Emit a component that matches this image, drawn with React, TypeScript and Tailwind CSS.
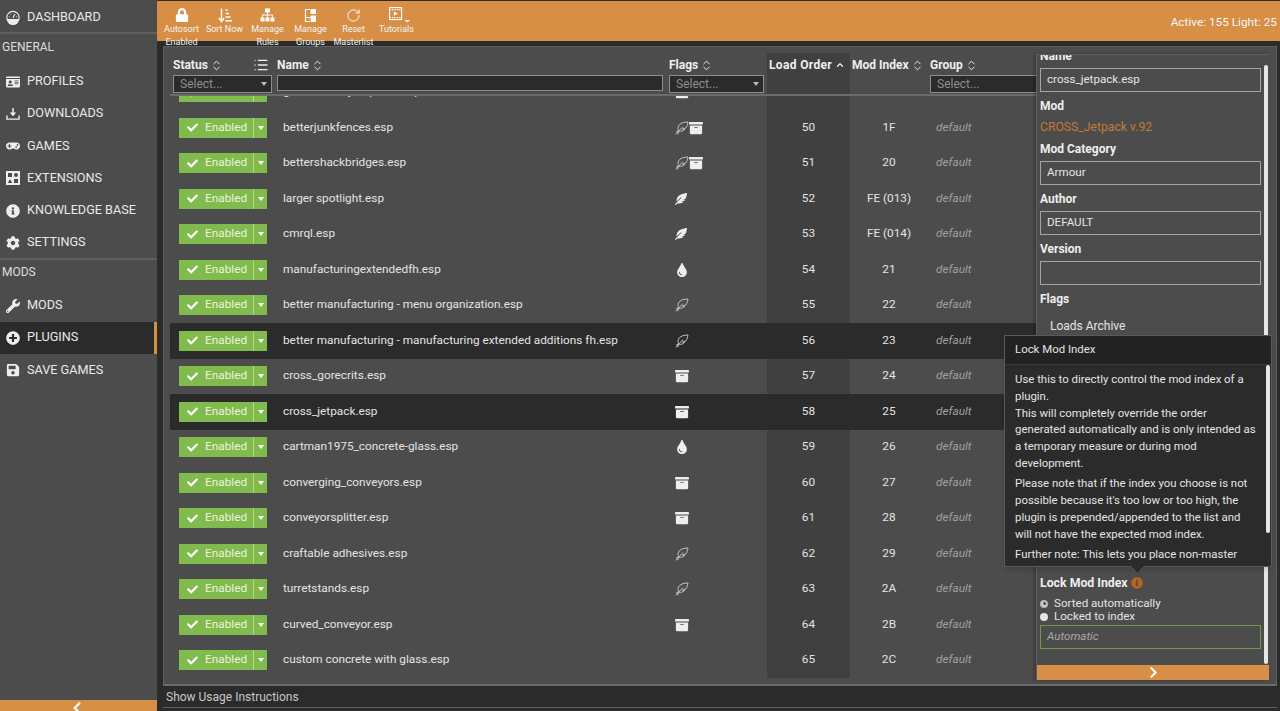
import { ChevronsUpDown, ChevronUp, List, RotateCw } from "lucide-react";
import {
  FaArchive,
  FaCheck,
  FaChevronLeft,
  FaChevronRight,
  FaCog,
  FaFeatherAlt,
  FaGamepad,
  FaIdCard,
  FaInfoCircle,
  FaLock,
  FaPlusCircle,
  FaSave,
  FaTint,
  FaWrench,
} from "react-icons/fa";
import type { ReactNode } from "react";

type Flag = "outline" | "feather" | "archive" | "drop";

const plugins: { name: string; flags: Flag[]; order: number; index: string }[] = [
  { name: "glass_conveyor_patch.esp", flags: ["archive"], order: 49, index: "1E" },
  { name: "betterjunkfences.esp", flags: ["outline", "archive"], order: 50, index: "1F" },
  { name: "bettershackbridges.esp", flags: ["outline", "archive"], order: 51, index: "20" },
  { name: "larger spotlight.esp", flags: ["feather"], order: 52, index: "FE (013)" },
  { name: "cmrql.esp", flags: ["feather"], order: 53, index: "FE (014)" },
  { name: "manufacturingextendedfh.esp", flags: ["drop"], order: 54, index: "21" },
  { name: "better manufacturing - menu organization.esp", flags: ["outline"], order: 55, index: "22" },
  { name: "better manufacturing - manufacturing extended additions fh.esp", flags: ["outline"], order: 56, index: "23" },
  { name: "cross_gorecrits.esp", flags: ["archive"], order: 57, index: "24" },
  { name: "cross_jetpack.esp", flags: ["archive"], order: 58, index: "25" },
  { name: "cartman1975_concrete-glass.esp", flags: ["drop"], order: 59, index: "26" },
  { name: "converging_conveyors.esp", flags: ["archive"], order: 60, index: "27" },
  { name: "conveyorsplitter.esp", flags: ["archive"], order: 61, index: "28" },
  { name: "craftable adhesives.esp", flags: ["outline"], order: 62, index: "29" },
  { name: "turretstands.esp", flags: ["outline"], order: 63, index: "2A" },
  { name: "curved_conveyor.esp", flags: ["archive"], order: 64, index: "2B" },
  { name: "custom concrete with glass.esp", flags: [], order: 65, index: "2C" },
];

const selected = [56, 58];

// hand drawn icons for what the icon packs don't have
const DashboardIcon = () => (
  <svg width="15" height="15" viewBox="0 0 15 15" fill="none">
    <circle cx="7.5" cy="7.5" r="6.6" stroke="#eeeeee" strokeWidth="1.2" />
    <path d="M0.9 9h13.2a6.6 6.6 0 0 1-13.2 0z" fill="#eeeeee" />
    <path d="M7.5 8L9.5 3.6" stroke="#eeeeee" strokeWidth="1.2" />
    <path d="M3 6.6l1 .3M4.8 3.6l.6.8M11.9 6.6l-1 .3" stroke="#eeeeee" strokeWidth="1" />
  </svg>
);

const DownloadIcon = () => (
  <svg width="15" height="14" viewBox="0 0 15 14" fill="none">
    <path d="M7.5 0.5v7" stroke="#eeeeee" strokeWidth="1.6" />
    <path d="M4 5.5h7l-3.5 4z" fill="#eeeeee" />
    <path d="M1 8.5v4h13v-4" stroke="#eeeeee" strokeWidth="1.5" />
  </svg>
);

const ExtensionsIcon = () => (
  <svg width="14" height="14" viewBox="0 0 14 14">
    <rect width="14" height="14" fill="#eeeeee" />
    <rect x="2" y="2" width="4" height="4" fill="#4c4c4c" />
    <circle cx="10" cy="4" r="2" fill="#4c4c4c" />
    <rect x="8" y="8" width="4" height="4" fill="#4c4c4c" />
    <path d="M4 8l2.2 4H1.8z" fill="#4c4c4c" />
  </svg>
);

const SortNowIcon = () => (
  <svg width="14" height="15" viewBox="0 0 14 15" fill="none" stroke="white">
    <path d="M3.5 0.5v12" strokeWidth="1.5" />
    <path d="M0.8 10l2.7 3.6L6.2 10" strokeWidth="1.4" />
    <path d="M7.5 2h2M7.5 5.5h3.5M7.5 9h5M7.5 12.7h6.5" strokeWidth="1.4" />
  </svg>
);

const RulesIcon = () => (
  <svg width="15" height="14" viewBox="0 0 15 14" fill="white">
    <rect x="5" y="0.5" width="5" height="4" />
    <rect x="0.5" y="9.5" width="4" height="4" />
    <rect x="5.5" y="9.5" width="4" height="4" />
    <rect x="10.5" y="9.5" width="4" height="4" />
    <path d="M7 4.5h1v2h4.9v3h-1V7.5H8v2H7v-2H3v2H2v-3h5z" />
  </svg>
);

const GroupsIcon = () => (
  <svg width="13" height="15" viewBox="0 0 13 15" fill="none">
    <path d="M6 1.5H1.5v8H6" stroke="white" strokeWidth="1.2" />
    <path d="M1.5 9.5v4H6" stroke="white" strokeWidth="1.2" />
    <rect x="6.5" y="1" width="5.5" height="5" rx="1" fill="white" />
    <rect x="6.5" y="7.5" width="5.5" height="6.5" rx="1" fill="white" />
  </svg>
);

const TutorialsIcon = () => (
  <svg width="22" height="16" viewBox="0 0 22 16" className="ml-[6px]">
    <rect x="0.6" y="0.6" width="12" height="12" fill="none" stroke="white" strokeWidth="1.1" />
    <path d="M0.6 2.6h12M0.6 10.6h12" stroke="white" strokeWidth="1.2" strokeDasharray="1.4 1" />
    <path d="M4.8 4.4l4 2.2-4 2.2z" fill="white" />
    <path d="M15.5 13h5.5l-2.75 2.6z" fill="white" />
  </svg>
);

const OutlineFeather = () => (
  <svg width="14" height="14" viewBox="0 0 14 14" fill="none" stroke="#cfcfcf" strokeWidth="0.9">
    <path d="M13 1C9 1 5 2 3.5 5C2.8 6.5 3 8.5 3.5 10.2C6 10.7 8 10 9.6 8.5L7.5 8L10.8 7C11.8 5.5 12.6 3.5 13 1Z" />
    <path d="M0.8 13.4L8 5.5" />
    <path d="M1 10.8h2.2M3 13.2v-2.2" />
  </svg>
);

const NavItem = ({ icon, label, active }: { icon: ReactNode; label: string; active?: boolean }) => (
  <div
    className={`h-[32.25px] flex items-center gap-[7px] pl-[6px] text-[12.65px] text-[#e8e8e8] ${
      active ? "bg-[#2b2b2b] border-r-[3px] border-[#d68f45]" : ""
    }`}>
    <span className="w-[14px] flex justify-center text-[14px] text-[#eeeeee]">{icon}</span>
    {label}
  </div>
);

const Sidebar = () => (
  <div className="w-[157px] shrink-0 bg-[#4c4c4c] flex flex-col">
    <div className="h-[34px] border-b-2 border-[#5e5e5e] pt-px">
      <NavItem icon={<DashboardIcon />} label="DASHBOARD" />
    </div>
    <div className="h-[26px] flex items-center pl-[2px] text-[12px] text-[#dddddd]">GENERAL</div>
    <div className="flex flex-col pt-[5.5px]">
      <NavItem icon={<FaIdCard />} label="PROFILES" />
      <NavItem icon={<DownloadIcon />} label="DOWNLOADS" />
      <NavItem icon={<FaGamepad />} label="GAMES" />
      <NavItem icon={<ExtensionsIcon />} label="EXTENSIONS" />
      <NavItem icon={<FaInfoCircle />} label="KNOWLEDGE BASE" />
      <NavItem icon={<FaCog />} label="SETTINGS" />
    </div>
    <div className="-mt-[1px] h-[2px] bg-[#5e5e5e]" />
    <div className="h-[24px] flex items-center pl-[2px] text-[12px] text-[#dddddd]">MODS</div>
    <div className="flex flex-col pt-[5.5px]">
      <NavItem icon={<FaWrench />} label="MODS" />
      <NavItem icon={<FaPlusCircle />} label="PLUGINS" active />
      <NavItem icon={<FaSave />} label="SAVE GAMES" />
    </div>
    <div className="flex-1" />
    <div className="h-[11px] bg-[#d68f45] flex justify-center overflow-hidden pr-[4px]">
      <FaChevronLeft className="text-white text-[14px] mt-[1px]" />
    </div>
  </div>
);

const ToolButton = ({ icon, lines }: { icon: ReactNode; lines: string[] }) => (
  <div className="w-[43px] shrink-0 flex flex-col items-center">
    <div className="h-[16px] flex items-center text-white">{icon}</div>
    <div className="text-[9px] leading-[13px] text-center whitespace-nowrap text-[#f4f4f4]">
      {lines.map((l) => (
        <div key={l}>{l}</div>
      ))}
    </div>
  </div>
);

const Toolbar = () => (
  <div className="h-[40px] shrink-0 mt-px bg-[#d68f45] flex items-start justify-between pl-[3px] pr-[3px] pt-[6px] relative z-10">
    <div className="flex">
      <ToolButton icon={<FaLock size={14} />} lines={["Autosort", "Enabled"]} />
      <ToolButton icon={<SortNowIcon />} lines={["Sort Now"]} />
      <ToolButton icon={<RulesIcon />} lines={["Manage", "Rules"]} />
      <ToolButton icon={<GroupsIcon />} lines={["Manage", "Groups"]} />
      <ToolButton icon={<RotateCw size={15} strokeWidth={1.5} />} lines={["Reset", "Masterlist"]} />
      <ToolButton icon={<TutorialsIcon />} lines={["Tutorials"]} />
    </div>
    <div className="text-[11.8px] text-[#f5f5f5] pt-[7px]">Active: 155 Light: 25</div>
  </div>
);

const SortHead = ({ label, className }: { label: string; className?: string }) => (
  <div className={`flex items-center gap-[2px] text-[12px] font-bold text-[#eeeeee] h-[16px] whitespace-nowrap ${className ?? ""}`}>
    {label}
    <ChevronsUpDown size={13} strokeWidth={1.8} />
  </div>
);

const SelectBox = ({ className }: { className?: string }) => (
  <div
    className={`h-[18px] bg-[#2b2b2b] border border-[#8e8e8e] flex items-center justify-between pl-[6px] pr-[4px] text-[12px] text-[#8e8e8e] ${
      className ?? ""
    }`}>
    Select...
    <span className="w-0 h-0 border-x-[3px] border-x-transparent border-t-[4px] border-t-[#bbbbbb]" />
  </div>
);

const TableHeader = () => (
  <div className="h-[43px] shrink-0 flex border-b-2 border-[#6b6b6b]">
    <div className="w-[107px] shrink-0 pt-[4px] pl-[3px] flex flex-col gap-[1.5px]">
      <div className="flex justify-between pr-[8px]">
        <SortHead label="Status" />
        <List size={16} className="text-[#eeeeee]" />
      </div>
      <SelectBox className="w-[99px]" />
    </div>
    <div className="w-[392px] shrink-0 pt-[4px] flex flex-col gap-[1.5px]">
      <SortHead label="Name" />
      <div className="w-[386px] h-[16px] bg-[#2b2b2b] border border-[#8e8e8e]" />
    </div>
    <div className="w-[98px] shrink-0 pt-[4px] flex flex-col gap-[1.5px]">
      <SortHead label="Flags" />
      <SelectBox className="w-[95px]" />
    </div>
    <div className="w-[83px] shrink-0 bg-[#404040] pt-[4px] pl-[2px]">
      <div className="flex items-center gap-[3px] text-[12px] tracking-[0.35px] font-bold text-[#eeeeee] h-[16px] whitespace-nowrap">
        Load Order
        <ChevronUp size={10} strokeWidth={3} />
      </div>
    </div>
    <div className="w-[79px] shrink-0 pt-[4px] pl-[2px]">
      <SortHead label="Mod Index" className="text-[11.7px]" />
    </div>
    <div className="flex-1 min-w-0 overflow-hidden pt-[4px] pl-[1px] flex flex-col gap-[1.5px]">
      <SortHead label="Group" />
      <SelectBox className="w-[140px] shrink-0" />
    </div>
  </div>
);

const FlagIcon = ({ flag }: { flag: Flag }) => {
  if (flag === "outline") return <OutlineFeather />;
  if (flag === "feather") return <FaFeatherAlt size={12} className="text-[#eeeeee]" />;
  if (flag === "archive") return <FaArchive size={14} className="text-[#eeeeee]" />;
  return <FaTint size={14} className="text-[#eeeeee]" />;
};

const Row = ({ plugin }: { plugin: (typeof plugins)[number] }) => {
  const isSelected = selected.includes(plugin.order);
  return (
    <div className={`h-[35.5px] shrink-0 flex items-center text-[11.8px] text-[#e4e4e4] ${isSelected ? "bg-[#2b2b2b]" : ""}`}>
      <div className="w-[107px] shrink-0 pl-[9px]">
        <div className="w-[88px] h-[20px] bg-[#82bb4d] flex items-center text-[11.8px] text-[#eaf3de]">
          <div className="flex-1 flex items-center gap-[7px] pl-[8px]">
            <FaCheck size={11} className="text-white" />
            Enabled
          </div>
          <div className="w-[14px] h-full border-l border-[#b3d68f] flex items-center justify-center">
            <span className="w-0 h-0 border-x-[3px] border-x-transparent border-t-[4px] border-t-white" />
          </div>
        </div>
      </div>
      <div className="w-[392px] shrink-0 pl-[6px] whitespace-nowrap">{plugin.name}</div>
      <div className="w-[98px] shrink-0 pl-[6px] flex items-center">
        {plugin.flags.map((f) => (
          <FlagIcon key={f} flag={f} />
        ))}
      </div>
      <div className={`w-[83px] shrink-0 h-full flex items-center justify-center ${isSelected ? "" : "bg-[#404040]"}`}>
        {plugin.order}
      </div>
      <div className="w-[79px] shrink-0 text-center pr-[1px]">{plugin.index}</div>
      <div className="flex-1 pl-[7px] italic text-[#a0a0a0]">default</div>
    </div>
  );
};

const DetailInput = ({ value, className }: { value?: string; className?: string }) => (
  <div className={`h-[24px] border flex items-center px-[6px] text-[11.6px] ${className ?? "border-[#a5a5a5] text-[#e4e4e4]"}`}>
    {value}
  </div>
);

const DetailLabel = ({ children }: { children: ReactNode }) => (
  <div className="text-[12px] font-bold text-[#eeeeee] h-[14px] leading-[14px]">{children}</div>
);

const DetailsPanel = () => (
  <div className="w-[233px] shrink-0 h-[626px] mt-[7px] border-l border-t border-[#5e5e5e] flex flex-col shadow-[-2px_0_3px_rgba(0,0,0,0.25)]">
    <div className="flex-1 relative overflow-hidden pl-[3px] pr-[8px]">
      <div className="-mt-[6px] flex flex-col">
        <DetailLabel>Name</DetailLabel>
        <div className="mt-[5px]"><DetailInput value="cross_jetpack.esp" /></div>
        <div className="mt-[7px]"><DetailLabel>Mod</DetailLabel></div>
        <div className="mt-[7px] text-[12.2px] leading-[14px] text-[#c07a35]">CROSS_Jetpack v.92</div>
        <div className="mt-[8px]"><DetailLabel>Mod Category</DetailLabel></div>
        <div className="mt-[5px]"><DetailInput value="Armour" /></div>
        <div className="mt-[7px]"><DetailLabel>Author</DetailLabel></div>
        <div className="mt-[5px]"><DetailInput value="DEFAULT" /></div>
        <div className="mt-[7px]"><DetailLabel>Version</DetailLabel></div>
        <div className="mt-[5px]"><DetailInput /></div>
        <div className="mt-[7px]"><DetailLabel>Flags</DetailLabel></div>
        <div className="mt-[13px] pl-[10px] text-[12px] leading-[14px] text-[#e4e4e4]">Loads Archive</div>
        <div className="mt-[243px] flex items-center gap-[3px]">
          <div className="text-[12.3px] font-bold text-[#eeeeee] h-[14px] leading-[14px]">Lock Mod Index</div>
          <FaInfoCircle size={12} className="text-[#b5651d]" />
        </div>
        <div className="mt-[7px] flex items-center gap-[6px] text-[11.6px] leading-[13px] text-[#e4e4e4]">
          <span className="w-[8px] h-[8px] rounded-full bg-[#e4e4e4] border-2 border-[#bbbbbb] flex items-center justify-center">
            <span className="w-[3px] h-[3px] rounded-full bg-[#4c4c4c]" />
          </span>
          Sorted automatically
        </div>
        <div className="flex items-center gap-[6px] text-[11.6px] leading-[13px] text-[#e4e4e4]">
          <span className="w-[8px] h-[8px] rounded-full bg-[#e4e4e4]" />
          Locked to index
        </div>
        <div className="mt-[2px]">
          <DetailInput value="Automatic" className="border-[#6f9a45] italic text-[#a8a8a8]" />
        </div>
      </div>
      <div className="absolute right-[1px] top-[10px] bottom-[1px] w-[4px] rounded-full bg-[#e4e7ea]" />
    </div>
    <div className="h-[15px] bg-[#d68f45] flex items-center justify-center">
      <FaChevronRight size={13} className="text-white" />
    </div>
  </div>
);

const LockTooltip = () => (
  <div className="absolute left-[847px] top-[294px] w-[268px] h-[232px] bg-[#2b2b2b] border border-[#5a5a5a] flex flex-col shadow-md">
    <div className="h-[29px] shrink-0 bg-[#222222] border-b border-[#3a3a3a] flex items-center pl-[10px] text-[11.4px] text-[#e4e4e4]">
      Lock Mod Index
    </div>
    <div className="flex-1 overflow-hidden relative pl-[10px] pr-[13px] pt-[6px] text-[11.4px] leading-[16.8px] text-[#e4e4e4]">
      <p>
        Use this to directly control the mod index of a plugin.
        <br />
        This will completely override the order generated automatically and is only intended as a temporary measure or during mod development.
      </p>
      <p className="mt-[3.5px]">
        Please note that if the index you choose is not possible because it's too low or too high, the plugin is prepended/appended to the list and will not have the expected mod index.
      </p>
      <p className="mt-[3.5px]">Further note: This lets you place non-master</p>
      <div className="absolute right-[1px] top-0 h-[168px] w-[4px] rounded-full bg-[#e4e7ea]" />
    </div>
    <div className="absolute left-[127px] -bottom-[6px] w-[11px] h-[11px] rotate-45 bg-[#2b2b2b] border-r border-b border-[#5a5a5a]" />
  </div>
);

export default function App() {
  return (
    <div className="h-screen w-full overflow-hidden flex bg-[#2b2b2b] font-['Roboto',sans-serif]">
      <Sidebar />
      <div className="flex-1 min-w-0 flex flex-col">
        <Toolbar />
        <div className="flex-1 min-h-0 relative flex flex-col pl-[6px] pr-[3px] pt-[5px]">
          <div className="h-[640px] shrink-0 bg-[#4c4c4c] border border-[#5e5e5e] border-b-2 border-b-[#6b6b6b] flex pl-[6px]">
            <div className="w-[866px] shrink-0 flex flex-col">
              <div className="h-[6px]" />
              <TableHeader />
              <div className="flex-1 overflow-hidden flex flex-col">
                <div className="-mt-[21.5px] flex flex-col">
                  {plugins.map((p) => (
                    <Row key={p.order} plugin={p} />
                  ))}
                </div>
              </div>
            </div>
            <DetailsPanel />
          </div>
          <div className="h-[22px] flex items-center pl-[3px] text-[12px] text-[#c8c8c8] border-b border-[#5e5e5e]">
            Show Usage Instructions
          </div>
          <LockTooltip />
        </div>
      </div>
    </div>
  );
}
